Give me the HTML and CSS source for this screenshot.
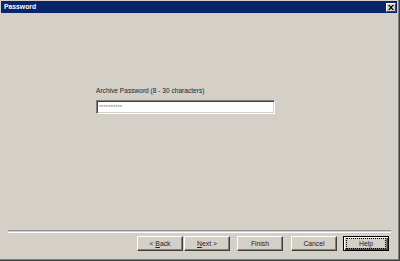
FILE: index.html
```html
<!DOCTYPE html>
<html>
<head>
<meta charset="utf-8">
<link rel="stylesheet" href="styles.css">
</head>
<body>
<div class="window">
  <div class="titlebar">
    <span class="title">Password</span>
    <span class="close"><svg width="6" height="5" viewBox="0 0 6 5"><path d="M0 0h1.5L3 1.6 4.5 0H6L3.8 2.5 6 5H4.5L3 3.4 1.5 5H0l2.2-2.5z" fill="#000"/></svg></span>
  </div>
  <div class="content">
    <div class="label">Archive Password (8 - 30 characters)</div>
    <div class="field"><span class="dots">**********</span></div>
  </div>
  <div class="footer">
    <div class="separator"></div>
    <div class="buttons">
      <div class="btn back">&lt;&nbsp;<u>B</u>ack</div>
      <div class="btn next"><u>N</u>ext&nbsp;&gt;</div>
      <div class="btn finish">Finish</div>
      <div class="btn cancel">Cancel</div>
      <div class="btn help default"><span class="focus">Help</span></div>
    </div>
  </div>
</div>
</body>
</html>
```
FILE: styles.css
```css
html, body {
  margin: 0;
  padding: 0;
  background: #d4d0c8;
}
body {
  font-family: "Liberation Sans", Arial, sans-serif;
  font-size: 7px;
  color: #000;
}
.window {
  width: 400px;
  height: 261px;
  box-sizing: border-box;
  display: flex;
  flex-direction: column;
  padding: 1px;
  border-right: 1px solid #404040;
  border-bottom: 1px solid #404040;
  box-shadow: inset -1px -1px 0 #808080;
  background: #d4d0c8;
}
.titlebar {
  height: 12px;
  margin-right: 1px;
  background: #0a246a;
  display: flex;
  align-items: center;
  justify-content: space-between;
  padding: 0 1px 0 3px;
}
.title {
  color: #fff;
  font-weight: bold;
  font-size: 6.8px;
  line-height: 12px;
}
.close {
  width: 10px;
  height: 9px;
  box-sizing: border-box;
  background: #d4d0c8;
  border-top: 1px solid #fff;
  border-left: 1px solid #fff;
  border-right: 1px solid #404040;
  border-bottom: 1px solid #404040;
  display: flex;
  align-items: center;
  justify-content: center;
}
.close svg { display: block; }
.content {
  flex: 1;
  padding: 73px 0 0 95px;
}
.label {
  font-size: 6.6px;
  line-height: 9px;
  margin-bottom: 5px;
  color: #222;
}
.field {
  width: 179px;
  height: 14px;
  box-sizing: border-box;
  background: #fff;
  border-top: 1px solid #808080;
  border-left: 1px solid #808080;
  border-right: 1px solid #fff;
  border-bottom: 1px solid #fff;
  box-shadow: inset 1px 1px 0 #404040, inset -1px -1px 0 #d4d0c8;
  padding-left: 2px;
  display: flex;
  align-items: center;
}
.dots {
  font-size: 5px;
  letter-spacing: 0.4px;
  color: #666;
  line-height: 5px;
}
.footer {
  padding: 0 7px 8px 7px;
}
.separator {
  height: 1px;
  border-top: 1px solid #909090;
  border-bottom: 1px solid #fff;
}
.buttons {
  display: flex;
  justify-content: flex-end;
  padding: 3px 2px 0 0;
}
.btn {
  width: 46px;
  height: 15px;
  box-sizing: border-box;
  border-top: 1px solid #fff;
  border-left: 1px solid #fff;
  border-right: 1px solid #404040;
  border-bottom: 1px solid #404040;
  box-shadow: inset -1px -1px 0 #808080;
  display: flex;
  align-items: center;
  justify-content: center;
  font-size: 6.8px;
  color: #222;
}
.next { margin-left: 1px; }
.finish { margin-left: 7px; }
.cancel { margin-left: 8px; }
.help { margin-left: 6px; }
.default {
  border: 1px solid #000;
  box-shadow: inset 1px 1px 0 #fff, inset -1px -1px 0 #404040, inset -2px -2px 0 #808080;
}
.focus {
  display: flex;
  align-items: center;
  justify-content: center;
  width: 38px;
  height: 9px;
  outline: 1px dotted #000;
}
```
